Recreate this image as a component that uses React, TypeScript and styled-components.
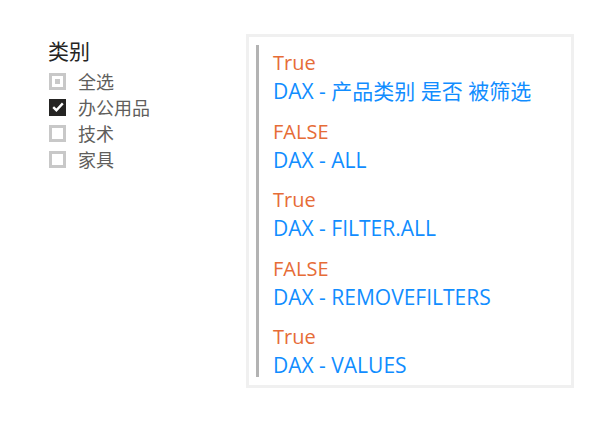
import styled, { createGlobalStyle } from 'styled-components';

const GlobalStyle = createGlobalStyle`
  body {
    margin: 0;
    background: #ffffff;
    font-family: 'Open Sans', 'Noto Sans', 'Noto Sans CJK SC', sans-serif;
  }
`;

type CheckState = 'partial' | 'checked' | 'empty';

const categories: { label: string; state: CheckState }[] = [
  { label: '全选', state: 'partial' },
  { label: '办公用品', state: 'checked' },
  { label: '技术', state: 'empty' },
  { label: '家具', state: 'empty' },
];

const results = [
  { value: 'True', name: 'DAX - 产品类别 是否 被筛选' },
  { value: 'FALSE', name: 'DAX - ALL' },
  { value: 'True', name: 'DAX - FILTER.ALL' },
  { value: 'FALSE', name: 'DAX - REMOVEFILTERS' },
  { value: 'True', name: 'DAX - VALUES' },
];

const App = () => {
  return (
    <Page>
      <GlobalStyle />
      <Slicer>
        <SlicerTitle>类别</SlicerTitle>
        <ItemList>
          {categories.map(item => (
            <Item key={item.label}>
              <Box state={item.state}>
                {item.state === 'checked' && (
                  <svg width="12" height="10" viewBox="0 0 12 10">
                    <path
                      d="M1.2 5.2 L4.4 8.2 L10.8 1.4"
                      fill="none"
                      stroke="#ffffff"
                      strokeWidth="2.4"
                    />
                  </svg>
                )}
                {item.state === 'partial' && <Dot />}
              </Box>
              <ItemLabel>{item.label}</ItemLabel>
            </Item>
          ))}
        </ItemList>
      </Slicer>
      <Card>
        <CardInner>
          {results.map((r, i) => (
            <Entry key={i}>
              <Value>{r.value}</Value>
              <Measure>{r.name}</Measure>
            </Entry>
          ))}
        </CardInner>
      </Card>
    </Page>
  );
};

const Page = styled.div`
  width: 600px;
  height: 425px;
  display: flex;
  align-items: flex-start;
  padding: 34px 0 0 48px;
  box-sizing: border-box;
`;

const Slicer = styled.div`
  width: 198px;
  display: flex;
  flex-direction: column;
`;

const SlicerTitle = styled.div`
  font-size: 21px;
  line-height: 34px;
  color: #252423;
`;

const ItemList = styled.div`
  display: flex;
  flex-direction: column;
`;

const Item = styled.div`
  display: flex;
  align-items: center;
  height: 26px;
  padding-left: 1px;
`;

const Box = styled.div<{ state: CheckState }>`
  width: 17px;
  height: 17px;
  box-sizing: border-box;
  display: flex;
  align-items: center;
  justify-content: center;
  border: ${({ state }) => (state === 'checked' ? 'none' : '3px solid #c8c8c8')};
  background: ${({ state }) => (state === 'checked' ? '#252423' : '#ffffff')};
`;

const Dot = styled.div`
  width: 5px;
  height: 5px;
  background: #c8c8c8;
`;

const ItemLabel = styled.span`
  margin-left: 12px;
  font-size: 18px;
  color: #605e5c;
`;

const Card = styled.div`
  width: 328px;
  height: 354px;
  box-sizing: border-box;
  border: 3px solid #f0f0f0;
  padding: 8px 0 8px 7px;
`;

const CardInner = styled.div`
  height: 100%;
  border-left: 3px solid #b3b3b3;
  padding: 3px 0 0 14px;
  display: flex;
  flex-direction: column;
  gap: 10.5px;
  box-sizing: border-box;
`;

const Entry = styled.div`
  display: flex;
  flex-direction: column;
`;

const Value = styled.div`
  font-size: 20px;
  line-height: 29px;
  color: #e66c37;
`;

const Measure = styled.div`
  font-size: 21px;
  line-height: 29px;
  color: #118dff;
`;

export default App;
